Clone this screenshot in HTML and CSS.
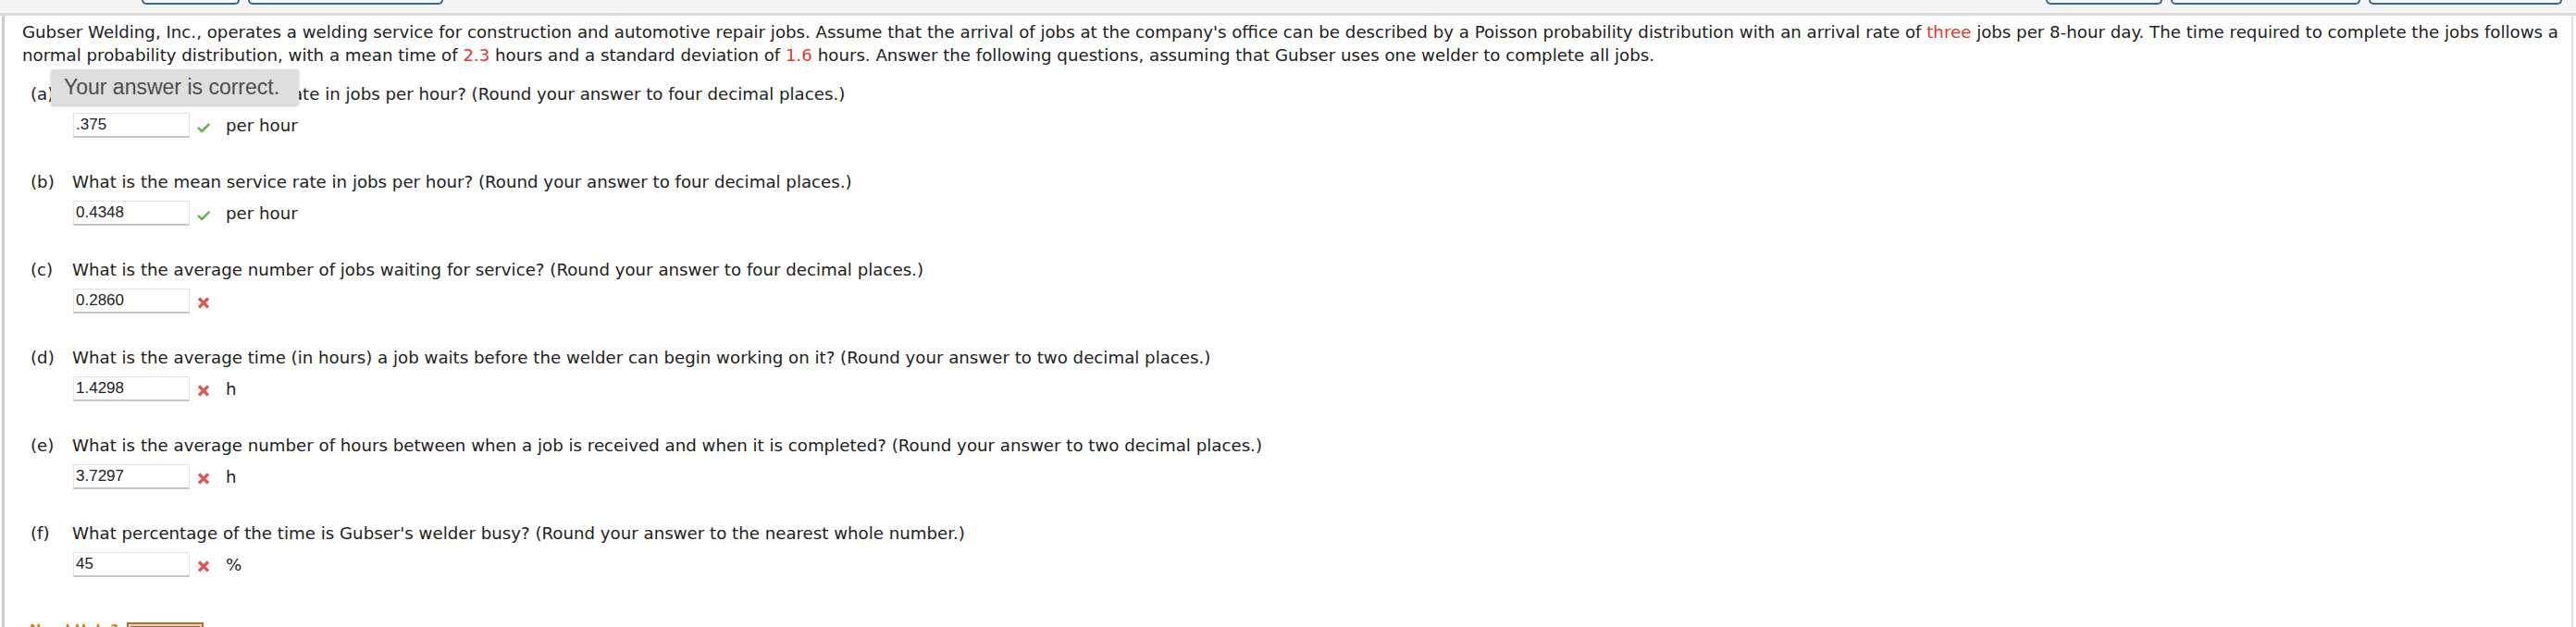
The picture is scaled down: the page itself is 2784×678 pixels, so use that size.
FILE: index.html
```html
<!DOCTYPE html>
<html lang="en">
<head>
<meta charset="utf-8">
<title>Gubser Welding</title>
<link rel="stylesheet" href="styles.css">
</head>
<body>
<div class="topbar">
  <div class="tabs">
    <span class="tab t1"></span><span class="tab t2"></span>
  </div>
  <div class="tabs">
    <span class="tab t3"></span><span class="tab t4"></span><span class="tab t5"></span>
  </div>
</div>
<div class="frame">
  <p class="intro">Gubser Welding, Inc., operates a welding service for construction and automotive repair jobs. Assume that the arrival of jobs at the company's office can be described by a Poisson probability distribution with an arrival rate of <span class="red">three</span> jobs per 8-hour day. The time required to complete the jobs follows a normal probability distribution, with a mean time of <span class="red">2.3</span> hours and a standard deviation of <span class="red">1.6</span> hours. Answer the following questions, assuming that Gubser uses one welder to complete all jobs.</p>
  <ol class="parts">
    <li class="part">
      <div class="q"><span class="label">(a)</span><span>What is the mean arrival rate in jobs per hour? (Round your answer to four decimal places.)</span></div>
      <div class="ans"><span class="field">.375</span>
        <svg class="mark" width="14" height="16" viewBox="0 0 14 16"><path d="M1.6 10.6 L5.2 14 L12.6 6.6" fill="none" stroke="#6cb05e" stroke-width="2.6" stroke-linecap="round" stroke-linejoin="round"/></svg>
        <span class="unit">per hour</span></div>
      <div class="tooltip">Your answer is correct.</div>
    </li>
    <li class="part">
      <div class="q"><span class="label">(b)</span><span>What is the mean service rate in jobs per hour? (Round your answer to four decimal places.)</span></div>
      <div class="ans"><span class="field">0.4348</span>
        <svg class="mark" width="14" height="16" viewBox="0 0 14 16"><path d="M1.6 10.6 L5.2 14 L12.6 6.6" fill="none" stroke="#6cb05e" stroke-width="2.6" stroke-linecap="round" stroke-linejoin="round"/></svg>
        <span class="unit">per hour</span></div>
    </li>
    <li class="part">
      <div class="q"><span class="label">(c)</span><span>What is the average number of jobs waiting for service? (Round your answer to four decimal places.)</span></div>
      <div class="ans"><span class="field">0.2860</span>
        <svg class="mark" width="14" height="16" viewBox="0 0 14 16"><path d="M2 4.5 L12 14.5 M12 4.5 L2 14.5" fill="none" stroke="#e25555" stroke-width="3.4"/></svg>
      </div>
    </li>
    <li class="part">
      <div class="q"><span class="label">(d)</span><span>What is the average time (in hours) a job waits before the welder can begin working on it? (Round your answer to two decimal places.)</span></div>
      <div class="ans"><span class="field">1.4298</span>
        <svg class="mark" width="14" height="16" viewBox="0 0 14 16"><path d="M2 4.5 L12 14.5 M12 4.5 L2 14.5" fill="none" stroke="#e25555" stroke-width="3.4"/></svg>
        <span class="unit">h</span></div>
    </li>
    <li class="part">
      <div class="q"><span class="label">(e)</span><span>What is the average number of hours between when a job is received and when it is completed? (Round your answer to two decimal places.)</span></div>
      <div class="ans"><span class="field">3.7297</span>
        <svg class="mark" width="14" height="16" viewBox="0 0 14 16"><path d="M2 4.5 L12 14.5 M12 4.5 L2 14.5" fill="none" stroke="#e25555" stroke-width="3.4"/></svg>
        <span class="unit">h</span></div>
    </li>
    <li class="part">
      <div class="q"><span class="label">(f)</span><span>What percentage of the time is Gubser's welder busy? (Round your answer to the nearest whole number.)</span></div>
      <div class="ans"><span class="field">45</span>
        <svg class="mark" width="14" height="16" viewBox="0 0 14 16"><path d="M2 4.5 L12 14.5 M12 4.5 L2 14.5" fill="none" stroke="#e25555" stroke-width="3.4"/></svg>
        <span class="unit">%</span></div>
    </li>
  </ol>
  <div class="help"><span class="help-label">Need Help?</span><span class="help-btn">Read It</span></div>
</div>
</body>
</html>
```
FILE: styles.css
```css
* { box-sizing: border-box; }

body {
  margin: 0;
  width: 2784px;
  height: 678px;
  overflow: hidden;
  background: #ffffff;
  color: #222222;
  font-family: "DejaVu Sans", Verdana, sans-serif;
}

.topbar {
  display: flex;
  justify-content: space-between;
  height: 17px;
  padding: 0 15px 0 153px;
  background: #f5f5f5;
  border-bottom: 3px solid #dcdcdc;
}

.tabs {
  display: flex;
  gap: 9px;
}

.tab {
  height: 5px;
  background: #f8f8f8;
  border: 2px solid #2f6ba3;
  border-top: none;
  border-radius: 0 0 6px 6px;
}
.t1 { width: 106px; }
.t2 { width: 211px; }
.t3 { width: 126px; }
.t4 { width: 205px; }
.t5 { width: 209px; }

.frame {
  margin-left: 2px;
  width: 2779px;
  height: 661px;
  padding: 5px 8px 0 19px;
  border-left: 3px solid #cccccc;
  border-right: 2px solid #e2e2e2;
}

.intro {
  margin: 0;
  font-size: 18.2px;
  line-height: 25px;
}

.red { color: #e8352b; }

.parts {
  list-style: none;
  margin: 17px 0 0;
  padding: 0;
}

.part {
  position: relative;
  padding-left: 9px;
  margin-bottom: 35px;
}

.q {
  display: flex;
  font-size: 18.2px;
  line-height: 25px;
}

.label {
  flex: none;
  width: 45px;
}

.ans {
  display: flex;
  align-items: center;
  height: 27px;
  margin-top: 8px;
  padding-left: 46px;
}

.field {
  display: flex;
  align-items: center;
  width: 126px;
  height: 27px;
  padding-left: 2px;
  border: 1px solid #e4e4e4;
  border-bottom: 2px solid #c6c6c6;
  background: #ffffff;
  color: #222222;
  font-family: "Liberation Sans", Arial, sans-serif;
  font-size: 17px;
}

.mark {
  flex: none;
  margin-left: 8px;
}

.unit {
  margin-left: 17px;
  font-size: 18.2px;
  line-height: 25px;
}

.tooltip {
  position: absolute;
  left: 31px;
  top: -14px;
  width: 268px;
  height: 39px;
  padding-left: 14px;
  background: #dedede;
  color: #4d4d4d;
  border-radius: 3px;
  box-shadow: 0 1px 3px rgba(0, 0, 0, 0.22);
  font-family: "Liberation Sans", Arial, sans-serif;
  font-size: 23px;
  line-height: 39px;
  white-space: nowrap;
}

.help {
  display: flex;
  align-items: flex-start;
  margin-top: 46px;
  padding-left: 8px;
}

.help-label {
  color: #e07d17;
  font-size: 15px;
  font-weight: bold;
  line-height: 25px;
}

.help-btn {
  margin-left: 9px;
  margin-top: 3px;
  width: 83px;
  height: 26px;
  background: #f6d2a6;
  border: 2px solid #a57342;
  box-shadow: inset 0 0 0 2px #f6d2a6, inset 0 0 0 3px #8d6a45;
  color: #333333;
  font-family: "Liberation Sans", Arial, sans-serif;
  font-size: 14px;
  line-height: 22px;
  text-align: center;
}
```
